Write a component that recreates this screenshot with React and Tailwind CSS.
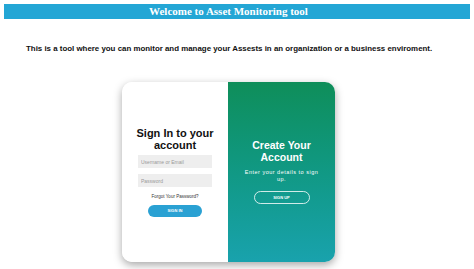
import React from 'react';

export default function App() {
  return (
    <div className="w-[474px] h-[269px] bg-white overflow-hidden font-['Liberation_Sans',Arial,sans-serif]">
      {/* Header */}
      <div className="pt-[4px] px-[4px]">
        <div className="h-[15px] bg-[#23a6d5] flex items-center justify-center pr-[17px]">
          <h1 className="text-white font-bold text-[11px] leading-none font-['Liberation_Serif',serif]">
            Welcome to Asset Monitoring tool
          </h1>
        </div>
      </div>

      <p className="mt-[26px] ml-[26px] text-[7.9px] font-bold text-[#111] leading-none whitespace-nowrap">
        This is a tool where you can monitor and manage your Assests in an organization or a business enviroment.
      </p>

      {/* Card */}
      <div className="mt-[29px] ml-[122px] w-[213px] h-[180px] flex rounded-[10px] shadow-[0_3px_8px_rgba(0,0,0,0.35)] overflow-hidden">
        <div className="w-[106px] bg-white flex flex-col items-center justify-center">
          <h2 className="text-[11px] font-bold text-[#111] leading-[12px] text-center">
            Sign In to your<br />account
          </h2>
          <input
            className="mt-[4px] w-[74px] h-[13px] bg-[#eeeeee] px-[3px] text-[5px] outline-none placeholder:text-[#999]"
            placeholder="Username or Email"
          />
          <input
            className="mt-[6px] w-[74px] h-[13px] bg-[#eeeeee] px-[3px] text-[5px] outline-none placeholder:text-[#999]"
            placeholder="Password"
          />
          <a className="mt-[8px] text-[4.5px] text-[#333] leading-none">Forgot Your Password?</a>
          <button className="mt-[5px] w-[54px] h-[12px] rounded-full bg-[#2aa1d3] text-white text-[4px] font-bold uppercase leading-none">
            Sign In
          </button>
        </div>
        <div className="flex-1 bg-gradient-to-b from-[#0f8e59] to-[#19a2ad] flex flex-col items-center justify-center text-white">
          <h2 className="text-[10.5px] font-bold leading-[12px] text-center">
            Create Your<br />Account
          </h2>
          <p className="mt-[6px] text-[5.5px] leading-[7px] tracking-[0.5px] text-center w-[76px]">
            Enter your details to sign up.
          </p>
          <button className="mt-[8px] w-[56px] h-[13px] rounded-full border border-white/80 text-white text-[4px] font-bold uppercase leading-none">
            Sign Up
          </button>
        </div>
      </div>
    </div>
  );
}
